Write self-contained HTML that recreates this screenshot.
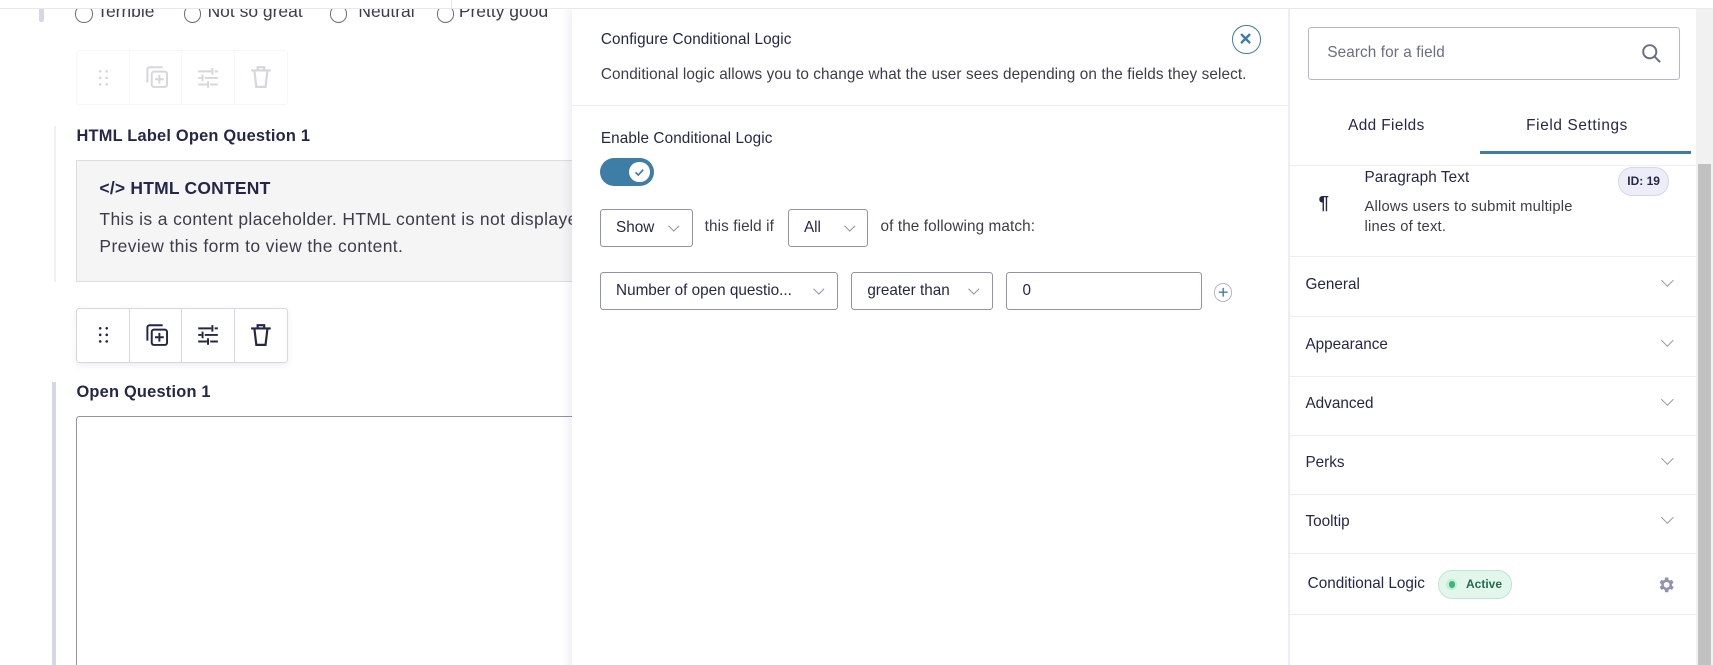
<!DOCTYPE html>
<html><head><meta charset="utf-8"><style>
*{box-sizing:border-box;margin:0;padding:0}
html,body{width:1713px;height:665px;overflow:hidden;background:#fff}
#w{zoom:1.09247;width:1568px;height:609px;position:relative;font-family:"Liberation Sans",sans-serif;color:#242748;overflow:hidden}
.a{position:absolute}
.t{white-space:nowrap}
.m{font-size:14px;letter-spacing:.1px}
.radio{width:16px;height:16px;border:1px solid #6b6d85;border-radius:50%}
.tb{display:flex;border:1px solid #d5d7e9;border-radius:3px;background:#fff}
.tb div{width:48px;height:48px;border-right:1px solid #d5d7e9;display:flex;align-items:center;justify-content:center}
.tb div:last-child{border-right:0}
.sel{border:1px solid #9092b2;border-radius:3px;height:35px;font-size:14px;color:#242748;display:flex;align-items:center;padding-left:14px}
.chev{position:absolute;right:13px;top:11px;width:7px;height:7px;border-right:1.5px solid #9092b2;border-bottom:1.5px solid #9092b2;transform:rotate(45deg)}
.sec{position:absolute;left:1180px;width:372px;height:55px;border-bottom:1px solid #ecedf8;font-size:14px;color:#242748}
.sec span{position:absolute;left:15px;top:18px}
.sec .chev{right:22px;top:18px;width:8px;height:8px}
</style></head><body><div id="w">
<div class="a" style="left:0;top:0;width:1568px;height:8px;border-bottom:1px solid #e6e7f2;background:#fff;z-index:3"></div>
<div class="a" style="left:413px;top:0;width:1px;height:8px;background:#e6e7f2;z-index:3"></div>
<div class="a" style="left:36px;top:4px;width:4px;height:16px;background:#d5d7e9;border-radius:2px"></div>
<div class="a radio" style="left:69px;top:5px"></div><div class="a t" style="left:89px;top:1px;font-size:16px;color:#3c3c4a">Terrible</div>
<div class="a radio" style="left:168px;top:5px"></div><div class="a t" style="left:190px;top:1px;font-size:16px;color:#3c3c4a">Not so great</div>
<div class="a radio" style="left:302px;top:5px"></div><div class="a t" style="left:328px;top:1px;font-size:16px;color:#3c3c4a">Neutral</div>
<div class="a radio" style="left:400px;top:5px"></div><div class="a t" style="left:420px;top:1px;font-size:16px;color:#3c3c4a">Pretty good</div>
<div class="a tb" style="left:70px;top:46px;opacity:.18">
<div><svg width="10" height="18"><g fill="#242748"><circle cx="2" cy="3" r="1.2"/><circle cx="8" cy="3" r="1.2"/><circle cx="2" cy="9" r="1.2"/><circle cx="8" cy="9" r="1.2"/><circle cx="2" cy="15" r="1.2"/><circle cx="8" cy="15" r="1.2"/></g></svg></div>
<div><svg width="24" height="24" fill="none" stroke="#242748" stroke-width="1.8"><path d="M4 17V5a2 2 0 0 1 2-2h12"/><rect x="8" y="7" width="14" height="14" rx="2"/><path d="M15 10v8M11 14h8"/></svg></div>
<div><svg width="22" height="20" fill="none" stroke="#242748" stroke-width="1.8"><path d="M2 4h12M17 4h3M15 1v6M2 10h3M8 10h12M6 7v6M2 16h8M13 16h7M11 13v6"/></svg></div>
<div><svg width="20" height="22" fill="none" stroke="#242748" stroke-width="2"><path d="M1 5h18M7 5V2h6v3M4 5l1.8 15h8.4L16 5"/></svg></div>
</div>
<div class="a" style="left:49px;top:115px;width:2px;height:143px;background:#f0f0f5"></div>
<div class="a t" style="left:70px;top:116px;font-size:15px;font-weight:bold;color:#242748;letter-spacing:.2px">HTML Label Open Question 1</div>
<div class="a" style="left:70px;top:146px;width:480px;height:112px;background:#f5f5f5;border:1px solid #ddd"></div>
<div class="a t" style="left:91px;top:163px;font-size:16px;font-weight:bold;color:#242748;letter-spacing:.2px">&lt;/&gt; HTML CONTENT</div>
<div class="a t" style="left:91px;top:189px;font-size:16px;color:#3c3c4a;line-height:24px;letter-spacing:.35px">This is a content placeholder. HTML content is not displayed<br>Preview this form to view the content.</div>
<div class="a tb" style="left:70px;top:282px;box-shadow:0 2px 6px rgba(40,40,90,.08)">
<div><svg width="10" height="18"><g fill="#242748"><circle cx="2" cy="3" r="1.2"/><circle cx="8" cy="3" r="1.2"/><circle cx="2" cy="9" r="1.2"/><circle cx="8" cy="9" r="1.2"/><circle cx="2" cy="15" r="1.2"/><circle cx="8" cy="15" r="1.2"/></g></svg></div>
<div><svg width="24" height="24" fill="none" stroke="#242748" stroke-width="1.8"><path d="M4 17V5a2 2 0 0 1 2-2h12"/><rect x="8" y="7" width="14" height="14" rx="2"/><path d="M15 10v8M11 14h8"/></svg></div>
<div><svg width="22" height="20" fill="none" stroke="#242748" stroke-width="1.8"><path d="M2 4h12M17 4h3M15 1v6M2 10h3M8 10h12M6 7v6M2 16h8M13 16h7M11 13v6"/></svg></div>
<div><svg width="20" height="22" fill="none" stroke="#242748" stroke-width="2"><path d="M1 5h18M7 5V2h6v3M4 5l1.8 15h8.4L16 5"/></svg></div>
</div>
<div class="a" style="left:48px;top:350px;width:3px;height:260px;background:#d5d7e9"></div>
<div class="a t" style="left:70px;top:351px;font-size:15px;font-weight:bold;color:#242748;letter-spacing:.2px">Open Question 1</div>
<div class="a" style="left:70px;top:381px;width:480px;height:240px;border:1px solid #9092b2;border-radius:3px"></div>
<div class="a" style="left:524px;top:8px;width:656px;height:610px;background:#fff;box-shadow:-3px 0 8px rgba(40,40,90,.08);border-right:1px solid #ecedf8"></div>
<div class="a t m" style="left:550px;top:28px;color:#242748">Configure Conditional Logic</div>
<div class="a t m" style="left:550px;top:60px;color:#3c3c4a">Conditional logic allows you to change what the user sees depending on the fields they select.</div>
<div class="a" style="left:1128px;top:23px;width:26px;height:26px;border:1.5px solid #3e7da6;border-radius:50%"><svg width="23" height="23" style="position:absolute;left:0;top:0"><path d="M8 8l7 7M15 8l-7 7" stroke="#3e7da6" stroke-width="2.2" stroke-linecap="round"/></svg></div>
<div class="a" style="left:524px;top:96px;width:656px;height:1px;background:#ecedf8"></div>
<div class="a t m" style="left:550px;top:119px;color:#242748">Enable Conditional Logic</div>
<div class="a" style="left:549px;top:145px;width:50px;height:25px;background:#3e7da6;border-radius:13px"><div class="a" style="left:27px;top:3px;width:19px;height:19px;background:#fff;border-radius:50%"><svg width="19" height="19"><path d="M6 9.5l2.5 2.5L13 7" stroke="#3e7da6" stroke-width="1.5" fill="none"/></svg></div></div>
<div class="a sel" style="left:549px;top:191px;width:85px">Show<span class="chev"></span></div>
<div class="a t m" style="left:645px;top:200px;color:#3c3c4a">this field if</div>
<div class="a sel" style="left:721px;top:191px;width:74px">All<span class="chev"></span></div>
<div class="a t m" style="left:806px;top:200px;color:#3c3c4a">of the following match:</div>
<div class="a sel" style="left:549px;top:249px;width:218px">Number of open questio...<span class="chev"></span></div>
<div class="a sel" style="left:779px;top:249px;width:130px">greater than<span class="chev"></span></div>
<div class="a sel" style="left:921px;top:249px;width:179px">0</div>
<div class="a" style="left:1111px;top:259px;width:17px;height:17px;border:1px solid #b4b6cc;border-radius:50%"><svg width="15" height="15" style="position:absolute;left:0;top:0"><path d="M7.5 3.5v8M3.5 7.5h8" stroke="#3e7da6" stroke-width="1.3"/></svg></div>
<div class="a" style="left:1180px;top:8px;width:1px;height:601px;background:#ecedf8"></div>
<div class="a" style="left:1197px;top:25px;width:341px;height:48px;border:1px solid #b4b6cc;border-radius:3px"></div>
<div class="a t m" style="left:1215px;top:40px;color:#6b6d85">Search for a field</div>
<svg class="a" style="left:1502px;top:39px" width="20" height="20" fill="none" stroke="#6b6d85" stroke-width="1.8"><circle cx="8" cy="8" r="6"/><path d="M12.5 12.5l5 5"/></svg>
<div class="a t m" style="left:1234px;top:107px;color:#242748;letter-spacing:.4px">Add Fields</div>
<div class="a t m" style="left:1397px;top:107px;color:#242748;letter-spacing:.6px">Field Settings</div>
<div class="a" style="left:1180px;top:151px;width:372px;height:1px;background:#ecedf8"></div>
<div class="a" style="left:1355px;top:138px;width:193px;height:3px;background:#3e7da6"></div>
<div class="a t" style="left:1207px;top:176px;font-size:17px;font-weight:bold;color:#242748">¶</div>
<div class="a t m" style="left:1249px;top:155px;color:#242748">Paragraph Text</div>
<div class="a t" style="left:1249px;top:180px;font-size:13.5px;color:#3c3c4a;line-height:19px;letter-spacing:.2px">Allows users to submit multiple<br>lines of text.</div>
<div class="a t" style="left:1481px;top:153px;width:47px;height:26px;background:#ecedf8;border:1px solid #d5d7e9;border-radius:13px;font-size:11px;font-weight:bold;text-align:center;line-height:24px">ID: 19</div>
<div class="a" style="left:1180px;top:234px;width:372px;height:1px;background:#ecedf8"></div>
<div class="sec" style="top:235px"><span>General</span><i class="chev"></i></div>
<div class="sec" style="top:290px"><span>Appearance</span><i class="chev"></i></div>
<div class="sec" style="top:344px"><span>Advanced</span><i class="chev"></i></div>
<div class="sec" style="top:398px"><span>Perks</span><i class="chev"></i></div>
<div class="sec" style="top:452px"><span>Tooltip</span><i class="chev"></i></div>
<div class="sec" style="top:507px;height:56px"><span style="left:17px;top:19px">Conditional Logic</span></div>
<div class="a t" style="left:1316px;top:522px;width:68px;height:26px;background:#e3f6ec;border:1px solid #bde8cf;border-radius:13px;font-size:11px;font-weight:bold;color:#276a52;line-height:24px;padding-left:25px">Active<span class="a" style="left:7px;top:7px;width:10px;height:10px;border-radius:50%;background:#c5ecd7"></span><span class="a" style="left:9px;top:9px;width:6px;height:6px;border-radius:50%;background:#3bb77e"></span></div>
<svg class="a" style="left:1516px;top:526px" width="18" height="18" viewBox="0 0 24 24"><path fill="#9092b2" d="M19.4 13a7.5 7.5 0 0 0 0-2l2.1-1.6-2-3.5-2.5 1a7 7 0 0 0-1.7-1L15 3h-4l-.4 2.9a7 7 0 0 0-1.7 1l-2.5-1-2 3.5L6.6 11a7.5 7.5 0 0 0 0 2l-2.1 1.6 2 3.5 2.5-1a7 7 0 0 0 1.7 1L11 21h4l.4-2.9a7 7 0 0 0 1.7-1l2.5 1 2-3.5zM13 15.5a3.5 3.5 0 1 1 0-7 3.5 3.5 0 0 1 0 7z"/></svg>
<div class="a" style="left:1552px;top:0;width:16px;height:609px;background:#f1f1f1"></div>
<div class="a" style="left:1554px;top:150px;width:12px;height:460px;background:#c1c1c1"></div>
</div></body></html>
